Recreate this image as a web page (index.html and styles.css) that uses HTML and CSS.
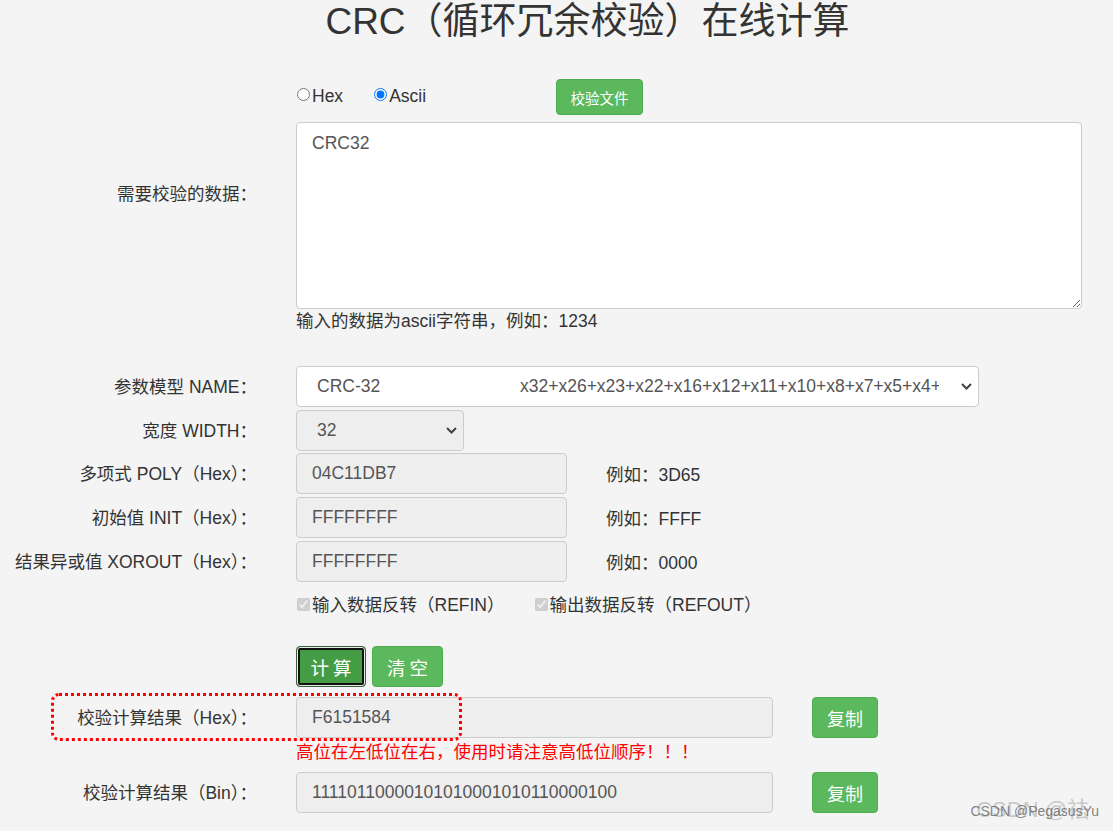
FILE: index.html
```html
<!DOCTYPE html>
<html lang="zh-CN">
<head>
<meta charset="utf-8">
<title>CRC（循环冗余校验）在线计算</title>
<link rel="stylesheet" href="styles.css">
</head>
<body>
<div class="page">
  <h1 class="title">CRC（循环冗余校验）在线计算</h1>

  <div class="form">
    <div class="block-data">
      <div class="label label-data">需要校验的数据：</div>
      <div class="mode-row">
        <label class="radio"><input type="radio" name="mode"><span>Hex</span></label>
        <label class="radio"><input type="radio" name="mode" checked><span>Ascii</span></label>
        <button class="btn btn-file">校验文件</button>
      </div>
      <textarea class="data-area">CRC32</textarea>
      <div class="hint">输入的数据为ascii字符串，例如：1234</div>
    </div>

    <div class="row row-name">
      <div class="label">参数模型 NAME：</div>
      <div class="select select-name">
        <span class="opt-name">CRC-32</span>
        <span class="opt-poly">x32+x26+x23+x22+x16+x12+x11+x10+x8+x7+x5+x4+x2+x+1</span>
        <svg class="chev" width="11" height="7" viewBox="0 0 11 7"><polyline points="1,1 5.5,5.5 10,1" fill="none" stroke="#444" stroke-width="2"/></svg>
      </div>
    </div>

    <div class="row row-gap3">
      <div class="label">宽度 WIDTH：</div>
      <div class="select select-width disabled">
        <span class="opt-name">32</span>
        <svg class="chev" width="11" height="7" viewBox="0 0 11 7"><polyline points="1,1 5.5,5.5 10,1" fill="none" stroke="#444" stroke-width="2"/></svg>
      </div>
    </div>

    <div class="row row-gap2">
      <div class="label">多项式 POLY（Hex）：</div>
      <div class="field-line">
        <div class="input input-small">04C11DB7</div>
        <span class="example">例如：3D65</span>
      </div>
    </div>

    <div class="row row-gap3">
      <div class="label">初始值 INIT（Hex）：</div>
      <div class="field-line">
        <div class="input input-small">FFFFFFFF</div>
        <span class="example">例如：FFFF</span>
      </div>
    </div>

    <div class="row row-gap3">
      <div class="label">结果异或值 XOROUT（Hex）：</div>
      <div class="field-line">
        <div class="input input-small">FFFFFFFF</div>
        <span class="example">例如：0000</span>
      </div>
    </div>

    <div class="row row-check">
      <div class="label"></div>
      <div class="checks">
        <label class="check"><input type="checkbox" checked disabled><span>输入数据反转（REFIN）</span></label>
        <label class="check"><input type="checkbox" checked disabled><span>输出数据反转（REFOUT）</span></label>
      </div>
    </div>

    <div class="row row-actions">
      <div class="label"></div>
      <div class="actions">
        <button class="btn btn-big btn-active">计算</button>
        <button class="btn btn-big">清空</button>
      </div>
    </div>

    <div class="row row-result">
      <div class="label">校验计算结果（Hex）：</div>
      <div class="field-line">
        <div class="input input-result">F6151584</div>
        <button class="btn btn-copy">复制</button>
      </div>
    </div>

    <div class="row row-warn">
      <div class="label"></div>
      <div class="warn">高位在左低位在右，使用时请注意高低位顺序！！！</div>
    </div>

    <div class="row row-bin">
      <div class="label">校验计算结果（Bin）：</div>
      <div class="field-line">
        <div class="input input-result">11110110000101010001010110000100</div>
        <button class="btn btn-copy">复制</button>
      </div>
    </div>
  </div>

  <div class="annot"></div>
  <div class="watermark">
    <span class="wm-big">CSDN @祛</span>
    <span class="wm-small">CSDN @PegasusYu</span>
  </div>
</div>
</body>
</html>
```

FILE: styles.css
```css
html, body {
  margin: 0;
  padding: 0;
  background: #f4f4f4;
}
body {
  font-family: "Liberation Sans", "Noto Sans CJK SC", sans-serif;
  font-size: 17.5px;
  color: #333;
}
.page {
  position: relative;
  width: 1113px;
  height: 831px;
  overflow: hidden;
}
.title {
  margin: 0;
  padding-left: 62px;
  text-align: center;
  font-size: 37px;
  font-weight: normal;
  line-height: 44px;
  color: #333;
}
.form {
  padding-right: 31px;
}
.label {
  text-align: right;
  white-space: nowrap;
  color: #333;
  line-height: 24px;
}

/* data block */
.block-data {
  display: grid;
  grid-template-columns: 257px 1fr;
  column-gap: 39px;
  margin-top: 35px;
}
.label-data {
  grid-column: 1;
  grid-row: 1 / 3;
  align-self: center;
}
.mode-row {
  grid-column: 2;
  grid-row: 1;
  display: flex;
  align-items: center;
  height: 36px;
}
.radio {
  display: inline-flex;
  align-items: center;
  line-height: 24px;
  margin-bottom: 3px;
}
.radio input {
  margin: 0 2px 2px 1px;
  width: 13px;
  height: 13px;
}
.radio + .radio {
  margin-left: 30px;
}
.data-area {
  grid-column: 2;
  grid-row: 2;
  margin-top: 7px;
  height: 187px;
  box-sizing: border-box;
  border: 1px solid #ccc;
  border-radius: 4px;
  background: #fff;
  padding: 10px 15px;
  font-family: inherit;
  font-size: 17.5px;
  line-height: 20px;
  color: #555;
  resize: both;
}
.hint {
  grid-column: 2;
  grid-row: 3;
  margin-top: 0;
  line-height: 24px;
}

/* buttons */
.btn {
  font-family: inherit;
  color: #fff;
  background: #5cb85c;
  border: 1px solid #4cae4c;
  border-radius: 4px;
  cursor: pointer;
  padding: 0;
}
.btn-file {
  margin: 0 0 0 130px;
  width: 87px;
  height: 36px;
  font-size: 14.5px;
}
.btn-big {
  width: 70px;
  height: 41px;
  font-size: 18.5px;
  letter-spacing: 4px;
  text-indent: 4px;
}
.btn-big + .btn-big {
  margin-left: 6px;
  width: 71px;
}
.btn-active {
  background: #449d44;
  border: 1px solid #3b5e3b;
  box-shadow: inset 0 0 0 1px #e4ede4, inset 0 0 0 3px #111;
}
.btn-copy {
  width: 66px;
  height: 41px;
  font-size: 18px;
  margin-left: 39px;
}

/* rows */
.row {
  display: grid;
  grid-template-columns: 257px 1fr;
  column-gap: 39px;
  align-items: center;
}
.row-name { margin-top: 33px; }
.row-gap3 { margin-top: 3px; }
.row-gap2 { margin-top: 2px; }
.row-check { margin-top: 11px; }
.row-check .label { height: 24px; }
.row-actions { margin-top: 29px; }
.row-result { margin-top: 10px; }
.row-warn { margin-top: 2px; }
.row-warn .label { height: 24px; }
.row-bin { margin-top: 8px; }

.select {
  display: flex;
  align-items: center;
  height: 41px;
  box-sizing: border-box;
  border: 1px solid #ccc;
  border-radius: 4px;
  background: #fff;
  color: #555;
  padding: 0 6px 0 20px;
  overflow: hidden;
  white-space: nowrap;
}
.select.disabled {
  background: #eee;
}
.select-name { width: 683px; }
.select-width { width: 168px; }
.opt-name {
  flex: none;
  width: 203px;
}
.select-width .opt-name {
  width: auto;
  flex: 1;
}
.opt-poly {
  flex: 1;
  min-width: 0;
  overflow: hidden;
  margin-right: 22px;
}
.chev {
  flex: none;
}

.field-line {
  display: flex;
  align-items: center;
}
.input {
  height: 41px;
  box-sizing: border-box;
  border: 1px solid #ccc;
  border-radius: 4px;
  background: #eee;
  color: #555;
  padding: 0 15px;
  line-height: 39px;
  white-space: nowrap;
}
.input-small { width: 271px; }
.input-result { width: 477px; }
.example {
  margin-left: 39px;
  color: #333;
}

.checks {
  display: flex;
  align-items: center;
  line-height: 24px;
}
.check {
  display: inline-flex;
  align-items: center;
  color: #333;
}
.check input {
  margin: 0 2px 2px 1px;
  width: 13px;
  height: 13px;
}
.check + .check {
  margin-left: 29px;
}
.actions {
  display: flex;
  align-items: center;
}
.warn {
  color: #f00;
  line-height: 24px;
}

/* annotation */
.annot {
  position: absolute;
  left: 51px;
  top: 693px;
  width: 405px;
  height: 42px;
  border: 3px dotted #f00;
  border-radius: 8px;
}
.watermark {
  position: absolute;
  right: 14px;
  bottom: 8px;
  width: 130px;
  height: 26px;
}
.wm-big {
  position: absolute;
  right: 10px;
  top: -6px;
  font-size: 22px;
  color: rgba(130, 130, 130, 0.4);
  white-space: nowrap;
}
.wm-small {
  position: absolute;
  right: 0;
  top: 6px;
  font-size: 14px;
  color: rgba(90, 90, 90, 0.75);
  white-space: nowrap;
}
```
